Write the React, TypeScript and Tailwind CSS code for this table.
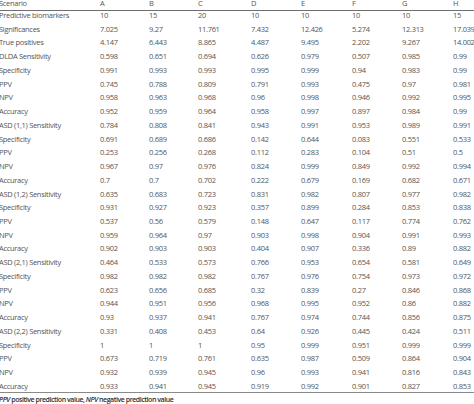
const columns = ['A', 'B', 'C', 'D', 'E', 'F', 'G', 'H'];

const rows: [string, string[]][] = [
  ['Predictive biomarkers', ['10', '15', '20', '10', '10', '10', '10', '15']],
  ['Significances', ['7.025', '9.27', '11.761', '7.432', '12.426', '5.274', '12.313', '17.039']],
  ['True positives', ['4.147', '6.443', '8.865', '4.487', '9.495', '2.202', '9.267', '14.002']],
  ['DLDA Sensitivity', ['0.598', '0.651', '0.694', '0.626', '0.979', '0.507', '0.985', '0.99']],
  ['Specificity', ['0.991', '0.993', '0.993', '0.995', '0.999', '0.94', '0.983', '0.99']],
  ['PPV', ['0.745', '0.788', '0.809', '0.791', '0.993', '0.475', '0.97', '0.981']],
  ['NPV', ['0.958', '0.963', '0.968', '0.96', '0.998', '0.946', '0.992', '0.995']],
  ['Accuracy', ['0.952', '0.959', '0.964', '0.958', '0.997', '0.897', '0.984', '0.99']],
  ['ASD (1,1) Sensitivity', ['0.784', '0.808', '0.841', '0.943', '0.991', '0.953', '0.989', '0.991']],
  ['Specificity', ['0.691', '0.689', '0.686', '0.142', '0.644', '0.083', '0.551', '0.533']],
  ['PPV', ['0.253', '0.256', '0.268', '0.112', '0.283', '0.104', '0.51', '0.5']],
  ['NPV', ['0.967', '0.97', '0.976', '0.824', '0.999', '0.849', '0.992', '0.994']],
  ['Accuracy', ['0.7', '0.7', '0.702', '0.222', '0.679', '0.169', '0.682', '0.671']],
  ['ASD (1,2) Sensitivity', ['0.635', '0.683', '0.723', '0.831', '0.982', '0.807', '0.977', '0.982']],
  ['Specificity', ['0.931', '0.927', '0.923', '0.357', '0.899', '0.284', '0.853', '0.838']],
  ['PPV', ['0.537', '0.56', '0.579', '0.148', '0.647', '0.117', '0.774', '0.762']],
  ['NPV', ['0.959', '0.964', '0.97', '0.903', '0.998', '0.904', '0.991', '0.993']],
  ['Accuracy', ['0.902', '0.903', '0.903', '0.404', '0.907', '0.336', '0.89', '0.882']],
  ['ASD (2,1) Sensitivity', ['0.464', '0.533', '0.573', '0.766', '0.953', '0.654', '0.581', '0.649']],
  ['Specificity', ['0.982', '0.982', '0.982', '0.767', '0.976', '0.754', '0.973', '0.972']],
  ['PPV', ['0.623', '0.656', '0.685', '0.32', '0.839', '0.27', '0.846', '0.868']],
  ['NPV', ['0.944', '0.951', '0.956', '0.968', '0.995', '0.952', '0.86', '0.882']],
  ['Accuracy', ['0.93', '0.937', '0.941', '0.767', '0.974', '0.744', '0.856', '0.875']],
  ['ASD (2,2) Sensitivity', ['0.331', '0.408', '0.453', '0.64', '0.926', '0.445', '0.424', '0.511']],
  ['Specificity', ['1', '1', '1', '0.95', '0.999', '0.951', '0.999', '0.999']],
  ['PPV', ['0.673', '0.719', '0.761', '0.635', '0.987', '0.509', '0.864', '0.904']],
  ['NPV', ['0.932', '0.939', '0.945', '0.96', '0.993', '0.941', '0.816', '0.843']],
  ['Accuracy', ['0.933', '0.941', '0.945', '0.919', '0.992', '0.901', '0.827', '0.853']],
];

const grid = 'grid grid-cols-[101px_49px_49px_53px_50px_51px_50px_51px_40px] -ml-px';

export default function App() {
  return (
    <div
      className="w-[474px] h-[404px] overflow-hidden bg-white text-[7.5px] tracking-[-0.3px] text-[#555555] whitespace-nowrap"
      style={{ fontFamily: '"Open Sans", sans-serif' }}
    >
      {/* Header */}
      <div className={`${grid} h-[11px] border-b border-[#6e6e6e] leading-[7.5px]`}>
        <div>Scenario</div>
        {columns.map((c) => (
          <div key={c}>{c}</div>
        ))}
      </div>

      {/* Body */}
      <div className="border-b-[1.5px] border-[#8a8a8a]">
        {rows.map(([label, values], i) => (
          <div
            key={i}
            className={`${grid} ${i === rows.length - 1 ? 'h-[10px]' : 'h-[13.74px]'} leading-[9px]`}
          >
            <div>{label}</div>
            {values.map((v, j) => (
              <div key={j}>{v}</div>
            ))}
          </div>
        ))}
      </div>

      {/* Footnote */}
      <div className="-ml-px pt-[2px] text-[7px] leading-[9px] text-[#2f2f2f] font-semibold tracking-[-0.45px]">
        <span className="italic">PPV</span> positive prediction value, <span className="italic">NPV</span> negative
        prediction value
      </div>
    </div>
  );
}
